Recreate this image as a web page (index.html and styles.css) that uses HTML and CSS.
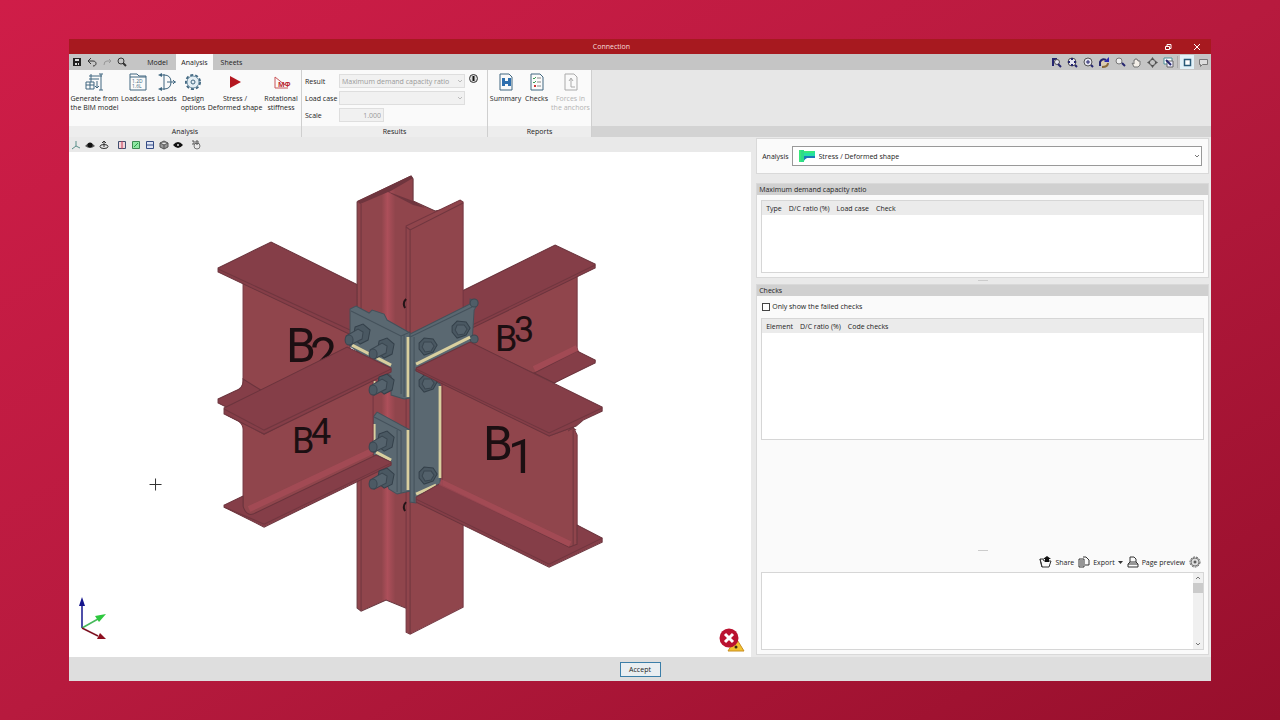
FILE: index.html
```html
<!DOCTYPE html>
<html lang="en">
  <head>
    <meta charset="UTF-8" />
    <meta name="viewport" content="width=device-width, initial-scale=1.0" />
    <title>Connection</title>
    <link rel="stylesheet" href="styles.css">
  </head>
  <body>
    <div class="window">
      <header class="titlebar">
        <h1>Connection</h1>
        <div class="window-buttons">
          <button aria-label="Restore"><svg width="8" height="8" viewBox="0 0 8 8"><path d="M1.500 3.500h4v3h-4zM3 3V1.500h4v4H6" /></svg></button>
          <button aria-label="Close"><svg width="8" height="8" viewBox="0 0 8 8"><path d="M1 1l6 6M7 1L1 7" /></svg></button>
        </div>
      </header>

      <nav class="tabbar">
        <div class="quick">
          <button aria-label="Save"><svg width="10" height="10" viewBox="0 0 10 10"><path d="M1 1h8v8H1z" fill="#222" /><path d="M3 2h4v2H3zM3 6h4v2H3z" fill="#ddd" /><path d="M5 6h1v2H5z" fill="#222" /></svg></button>
          <button aria-label="Undo"><svg width="10" height="10" viewBox="0 0 10 10"><path class="line" d="M4 1L1 4l3 3M1 4h5c4 0 4 5 0 5" /></svg></button>
          <button aria-label="Redo" disabled><svg width="10" height="10" viewBox="0 0 10 10"><path class="line" d="M7 2l2 2-2 2M9 4H5Q2 4 2 8" /></svg></button>
          <button aria-label="Search"><svg width="10" height="10" viewBox="0 0 10 10"><circle class="line" cx="4" cy="4" r="3" /><path class="line bold" d="M6 6l3 3" /></svg></button>
        </div>
        <div class="tabs">
          <button>Model</button>
          <button class="active">Analysis</button>
          <button>Sheets</button>
        </div>
        <div class="view-tools">
          <button aria-label="Zoom window"><svg width="11" height="11" viewBox="0 0 11 11"><path class="navy bold" d="M2 9V2h4" /><circle cx="6" cy="5" r="2.500" fill="#e4e4ee" stroke="#555" /><path class="navy bold" d="M7 7l3 3" /></svg></button>
          <button aria-label="Zoom all"><svg width="11" height="11" viewBox="0 0 11 11"><circle cx="5" cy="5" r="4" fill="#e4e4ee" stroke="#555" /><path class="navy bold" d="M5 1v2M5 7v2M1 5h2M7 5h2M8 8l2 2" /></svg></button>
          <button aria-label="Zoom real"><svg width="11" height="11" viewBox="0 0 11 11"><circle cx="5" cy="5" r="4" fill="#e4e4ee" stroke="#555" /><path class="navy" d="M3 5h4M5 3v4" /><path class="navy bold" d="M8 8l2 2" /></svg></button>
          <button aria-label="Redraw"><svg width="11" height="11" viewBox="0 0 11 11"><circle cx="5" cy="6" r="3" fill="#dccdb0" /><path class="navy bold" d="M1 9V5q2-4 6-2" /><path d="M10 0v5H5z" fill="#2a2ab0" /><path d="M9 6q0 4-6 4" fill="none" stroke="#8a6a3a" stroke-width="2" /></svg></button>
          <button aria-label="Previous view"><svg width="11" height="11" viewBox="0 0 11 11"><circle cx="4" cy="4" r="3" fill="#eee" stroke="#777" /><path class="navy bold" d="M7 6l3 3" /></svg></button>
          <button aria-label="Pan"><svg width="11" height="11" viewBox="0 0 11 11"><path d="M3 10L1 6l2 1V3h1V2h2v1h1v1h2v4l-2 2z" fill="#f4efe8" stroke="#777" /></svg></button>
          <button aria-label="Orbit"><svg width="11" height="11" viewBox="0 0 11 11"><circle cx="5.500" cy="5.500" r="3" fill="none" stroke="#555" /><path d="M5.500 0l2 3h-4zM5.500 11l2-3h-4zM0 5.500l3-2v4zM11 5.500l-3-2v4z" fill="#555" /></svg></button>
          <button aria-label="Print view"><svg width="11" height="11" viewBox="0 0 11 11"><path d="M1 1h8v6H1z" fill="#fff" stroke="#4a8f9a" /><path d="M4 4h6v6H4z" fill="#eef" stroke="#666" /><path class="navy bold" d="M3 3l5 5" /></svg></button>
          <span class="divider"></span>
          <button class="on" aria-label="Frame"><svg width="11" height="11" viewBox="0 0 11 11"><path d="M2.500 2.500h6v6h-6z" fill="#fff" stroke="#285a78" stroke-width="1.500" /></svg></button>
          <button aria-label="Comment"><svg width="11" height="11" viewBox="0 0 11 11"><path d="M1.500 2.500h8v5h-5l-2 2v-2h-1z" fill="#ddd" stroke="#777" /></svg></button>
        </div>
      </nav>

      <section class="ribbon">
        <div class="group analysis">
          <div class="group-body">
            <button class="tool generate"><svg width="20" height="18" viewBox="0 0 20 18"><path class="steel" d="M4 3h13M4 6h10M6 1v8M16 1v16M14 1h4M14 17h4M12 8v7M10 13l2 2 2-2M1 9h8v7H1zM1 12h8M5 9v7" /></svg>Generate from<br>the BIM model</button>
            <button class="tool loadcases"><svg width="20" height="18" viewBox="0 0 20 18"><path class="steel" d="M2 1h7l2 2h7v14H2zM2 4h16" /><text x="4" y="10">1.2D</text><text x="4" y="15">1.6L</text></svg>Loadcases</button>
            <button class="tool loads"><svg width="20" height="18" viewBox="0 0 20 18"><path class="steel" d="M3 2h4q7 0 7 7t-7 7H3M7 1v16M10 9h9M16 7l2 2-2 2" /><path d="M1 2l4-2v4zM1 16l4-2v4z" fill="#416780" /></svg>Loads</button>
            <button class="tool design"><svg width="20" height="18" viewBox="0 0 20 18"><circle class="steel" cx="10" cy="9" r="7" stroke-width="2" stroke-dasharray="3 2" /><circle cx="10" cy="9" r="6" fill="#e4eef4" stroke="#6d8ea3" /><circle class="steel" cx="10" cy="9" r="2" /></svg>Design<br>options</button>
            <button class="tool stress"><svg width="20" height="18" viewBox="0 0 20 18"><path d="M5 3l11 6-11 6z" fill="#b41720" /></svg>Stress /<br>Deformed shape</button>
            <button class="tool rotational"><svg width="20" height="18" viewBox="0 0 20 18"><path d="M4 15V4l10 8M4 15h13" fill="none" stroke="#c95558" /><text class="red" x="7" y="14">MΦ</text></svg>Rotational<br>stiffness</button>
          </div>
          <h2>Analysis</h2>
        </div>
        <div class="group results">
          <div class="group-body fields">
            <label for="result">Result</label>
            <span class="drop"><select id="result" disabled><option>Maximum demand capacity ratio</option></select><svg class="chevron" width="6" height="4" viewBox="0 0 6 4"><path d="M1 1l2 2 2-2" /></svg></span>
            <button class="info" aria-label="Result info"><svg width="9" height="9" viewBox="0 0 9 9"><circle cx="4.500" cy="4.500" r="4" fill="#ddd" stroke="#333" /><path d="M4.500 2v5" stroke="#111" stroke-width="2" /></svg></button>
            <label for="loadcase">Load case</label>
            <span class="drop"><select id="loadcase" disabled><option></option></select><svg class="chevron" width="6" height="4" viewBox="0 0 6 4"><path d="M1 1l2 2 2-2" /></svg></span>
            <label for="scale">Scale</label>
            <input id="scale" type="text" value="1.000" disabled>
          </div>
          <h2>Results</h2>
        </div>
        <div class="group reports">
          <div class="group-body">
            <button class="tool summary"><svg width="20" height="18" viewBox="0 0 20 18"><path class="steel" d="M4 1h9l3 3v13H4z" /><path d="M6 5h3v3h3V5h3v8h-3v-2H9v2H6z" fill="#2e6fae" /></svg>Summary</button>
            <button class="tool checks"><svg width="20" height="18" viewBox="0 0 20 18"><path class="steel" d="M4 1h9l3 3v13H4z" /><path d="M6 5l1 1 2-2M6 9l1 1 2-2" fill="none" stroke="#3b9b55" /><path d="M10 5h4M10 9h4M10 13h4" stroke="#888" /><path d="M7 12l2 2M9 12l-2 2" stroke="#c33" /></svg>Checks</button>
            <button class="tool forces" disabled><svg width="20" height="18" viewBox="0 0 20 18"><path d="M4 1h9l3 3v13H4zM10 6v8h4M8 8l2-3 2 3" fill="none" stroke="#aaa" /></svg>Forces in<br>the anchors</button>
          </div>
          <h2>Reports</h2>
        </div>
      </section>

      <main>
        <section class="viewport">
          <div class="view-bar">
            <button aria-label="Axes"><svg width="10" height="10" viewBox="0 0 10 10"><path d="M5 6V1M5 6L1 9M5 6l4 2" fill="none" stroke="#5b8f8a" /></svg></button>
            <button aria-label="Look"><svg width="10" height="10" viewBox="0 0 10 10"><path d="M0 6q5-6 10 0q-5 4-10 0z" fill="#555" /><circle cx="5" cy="5" r="2.500" fill="#111" /></svg></button>
            <button aria-label="Turn"><svg width="10" height="10" viewBox="0 0 10 10"><path class="line" d="M5 1v6M3 3l2-2 2 2" /><ellipse class="line" cx="5" cy="6.500" rx="4" ry="2" /></svg></button>
            <button class="gap" aria-label="Front"><svg width="10" height="10" viewBox="0 0 10 10"><path d="M1.500 1.500h7v7h-7z" fill="#f3d5da" stroke="#405070" /><path d="M5 1v8" stroke="#c33b55" /></svg></button>
            <button aria-label="Side"><svg width="10" height="10" viewBox="0 0 10 10"><path d="M1.500 1.500h7v7h-7z" fill="#8fe8a2" stroke="#3c8a50" /><path d="M3 7l4-4" stroke="#2a9a48" /></svg></button>
            <button aria-label="Top"><svg width="10" height="10" viewBox="0 0 10 10"><path d="M1.500 1.500h7v7h-7z" fill="#dfe5f5" stroke="#354c85" /><path d="M1 5h8" stroke="#354c85" /></svg></button>
            <button aria-label="Solid"><svg width="10" height="10" viewBox="0 0 10 10"><path d="M5 1l4 2v4L5 9 1 7V3zM1 3l4 2 4-2M5 5v4" fill="#999" stroke="#555" /></svg></button>
            <button aria-label="Hide"><svg width="10" height="10" viewBox="0 0 10 10"><path d="M0 5q5-6 10 0q-5 6-10 0z" fill="#111" /><circle cx="5" cy="5" r="1" fill="#ddd" /></svg></button>
            <button class="gap" aria-label="3D settings"><svg width="10" height="10" viewBox="0 0 10 10"><circle cx="6" cy="6" r="3" fill="none" stroke="#777" /><path d="M1 1h2v3H1M5 1h2v3H5z" fill="none" stroke="#555" /></svg></button>
          </div>
          <div class="scene">
            <svg class="model" viewBox="69 152 682 505" role="img" aria-label="Steel connection">
              <defs>
                <linearGradient id="column" x1="357" x2="406" gradientUnits="userSpaceOnUse">
                  <stop offset="0" stop-color="#90454c" />
                  <stop offset=".5" stop-color="#90454c" />
                  <stop offset=".62" stop-color="#ad4f5a" />
                  <stop offset=".78" stop-color="#90454c" />
                </linearGradient>
                <g id="head">
                  <path d="M-9-4l5-5 9 1 4 6-4 7-9 3-5-6z" fill="#4a5862" stroke="#34404a" />
                  <path d="M-4-5l7 0 3 4-3 5-6 1-3-5z" fill="#53616b" stroke="#3a4650" />
                </g>
                <g id="bolt">
                  <path d="M-3-7l8-3 7 6-2 10-8 4-7-6z" fill="#4a5862" stroke="#34404a" />
                  <path d="M-12 2L0-5l5 3-1 7-12 6-4-3z" fill="#55636d" stroke="#3a4650" />
                  <ellipse cx="-9" cy="6" rx="4" ry="5" fill="#4c5a64" stroke="#3a4650" />
                </g>
              </defs>

              <!-- B2 -->
              <path class="web" d="M243 279l107 50v80H243z" />
              <path class="flange" d="M218 399l17-8q9-3 8-12l21 13-34 17-12-6z" />
              <path class="flange" d="M218 268l53-26 87 43v48l-9 1-131-62z" />
              <path class="edge" d="M218 269l132 61" />
              <text class="big" x="286 310" y="362 371">B2</text>

              <!-- B3 -->
              <path class="web" d="M470 326l107-52v74q1 6 8 8l10 5-41 22-21-10-63-30z" />
              <path class="flange" d="M534 373l43-22 18 9v3l-41 20z" />
              <path class="shine" d="M534 369l43-21" />
              <path class="flange" d="M462 291l93-46 40 19v4l-125 61-8-3z" />
              <path class="edge" d="M470 326l125-61" />
              <text class="small" x="495 514" y="351 342">B3</text>

              <!-- column -->
              <path d="M357 202l54-26 2 3v22l22 10 5-1v391l-34 7-20-8-25 11-4-3z" fill="url(#column)" stroke="#66343c" />
              <path d="M357 201l53-25 3 2-24 14 24 9 12 7-12-3-25-13-28 12z" fill="#6f353e" />
              <path class="web" d="M406 226l54-26 3 2v405l-53 27-4-2z" />
              <path class="edge" d="M406 227l4 3 53-27M410 230v404M361 204v406" />
              <path d="M406 299q-4 4-1 9M406 502q-4 4-1 9" fill="none" stroke="#231417" stroke-width="2" />

              <!-- plates at the back and on the left -->
              <path class="plate" d="M350 309l6-3 13 7 3-3 12 4 3 6 23 13v65l-6 1-13-4v-19l-41-30z" />
              <path class="plate-edge" d="M351 311l50 25v58M401 336l9-4M404 335v62" />
              <path class="weld" d="M352 345l39 20M374 381v14" />
              <path class="plate" d="M373 417l4-5 33 18v61l-13 3-8-5-16-35z" />
              <path class="plate-edge" d="M374 417l27 14v62M397 430v62" />
              <path class="weld" d="M374 424v21M376 452l15 8" />
              <path class="weld" d="M408 337v60M408 430v60" />
              <use href="#bolt" x="358" y="334" />
              <use href="#bolt" x="382" y="348" />

              <!-- B4 -->
              <path class="web" d="M227 415l37 19 109-57v78l9 5-126 60q-13-4-13-14v-77q0-8-16-14z" />
              <path class="flange" d="M224 505l19-9v10q3 10 10 8l123-59 15 7v3l-127 62-40-20z" />
              <path class="shine" d="M249 509l123-58" />
              <path class="flange" d="M224 408l123-61 44 21v4l-127 62-40-20z" />
              <path class="edge" d="M224 409l40 21 127-61M224 507l40 17 127-61" />
              <text class="small" x="292 311" y="453 444">B4</text>
              <use href="#bolt" x="382" y="384" />
              <use href="#bolt" x="382" y="441" />
              <use href="#bolt" x="382" y="478" />

              <!-- front plate -->
              <path class="plate" d="M410 334l60-30v-5l4 1 3 5-3 5-2 32-57 28 25 14v105l-24 14-6-1z" />
              <path class="plate-edge" d="M410 337l62-30M414 337v166" />
              <circle class="nut" cx="474" cy="303" r="4" />
              <circle class="nut" cx="474" cy="339" r="4" />
              <use href="#head" x="461" y="330" />
              <use href="#head" x="428" y="347" />
              <use href="#head" x="428" y="384" />
              <use href="#head" x="428" y="476" />
              <path class="weld" d="M416 364l54-27M440 386v92M416 494l20-9" />

              <!-- B1 -->
              <path class="web" d="M442 380l107 56 24-9 4 8v110l-11 4-124-63z" />
              <path class="flange" d="M416 497l23-13 130 63 8-3v-19l25 13v4l-53 25-133-65z" />
              <path class="shine" d="M440 482l130 62" />
              <path class="flange" d="M416 368l54-26 132 65v4l-19 9-7 6-27 10-133-65z" />
              <path class="edge" d="M416 369l133 64 53-25M416 499l133 65 53-26M573 430v116M568 431q4-4 8-1" />
              <text class="big" x="483 508" y="460 473">B1</text>

              <path class="cross" d="M149.500 484.500h12M155.500 478.500v12" />
            </svg>
            <svg class="axes" width="30" height="44" viewBox="0 0 30 44">
              <path d="M4 31V8" stroke="#14148c" stroke-width="1.500" /><path d="M4 0l3 9H1z" fill="#14148c" />
              <path d="M4 31l16-9" stroke="#45b85a" stroke-width="1.500" /><path d="M28 17l-7 8-4-6z" fill="#2dc83e" />
              <path d="M4 31l16 8" stroke="#7c1020" stroke-width="1.500" /><path d="M28 42l-9 0 3-6z" fill="#8e1020" />
            </svg>
            <svg class="alert" width="26" height="26" viewBox="0 0 26 26">
              <path d="M17 11l8 13H9z" fill="#f2c230" stroke="#c98d20" />
              <circle cx="10" cy="11" r="9.500" fill="#ba1230" />
              <path d="M6 7l8 8M14 7l-8 8" stroke="#fff" stroke-width="3" />
              <circle cx="17" cy="20" r="1.500" fill="#3a2a10" />
            </svg>
          </div>
        </section>

        <aside>
          <div class="card picker">
            <label for="analysis">Analysis</label>
            <span class="drop wide">
              <svg class="flag" width="18" height="14" viewBox="0 0 18 14"><path d="M1 1h5v12H1z" fill="#2edb88" /><path d="M6 2h11v5H9l-3 5z" fill="#25e0a4" /><path d="M6 7h11v2H9l-3 2z" fill="#1b78b8" /><path d="M2 1v12M6 3h10" stroke="#38e87a" stroke-width="2" /></svg>
              <select id="analysis"><option>Stress / Deformed shape</option></select>
              <svg class="chevron" width="6" height="4" viewBox="0 0 6 4"><path d="M1 1l2 2 2-2" /></svg>
            </span>
          </div>

          <div class="card">
            <h3>Maximum demand capacity ratio</h3>
            <div class="card-body">
              <div class="grid-box ratio">
                <table>
                  <tr><th>Type</th><th>D/C ratio (%)</th><th>Load case</th><th>Check</th></tr>
                </table>
              </div>
            </div>
            <span class="grip"></span>
          </div>

          <div class="card grow">
            <h3>Checks</h3>
            <div class="card-body">
              <label class="tick"><input type="checkbox">Only show the failed checks</label>
              <div class="grid-box code">
                <table>
                  <tr><th>Element</th><th>D/C ratio (%)</th><th>Code checks</th></tr>
                </table>
              </div>
              <span class="grip inner"></span>
              <div class="report-tools">
                <button><svg width="13" height="12" viewBox="0 0 13 12"><path class="line" d="M1 3h3l1 2h7l-2 6H3zM1 3l2 8" /><path d="M8 0l4 3h-2v3H6V3H4z" fill="#111" /></svg>Share</button>
                <button class="export"><svg width="12" height="12" viewBox="0 0 12 12"><path class="line" d="M1 3h5v8H1zM5 1h3l3 3v5H7M2 5h3M2 7h3M2 9h3" /></svg>Export<svg width="5" height="3" viewBox="0 0 5 3"><path d="M0 0h5L2.500 3z" fill="#333" /></svg></button>
                <button><svg width="12" height="12" viewBox="0 0 12 12"><path class="line" d="M3 6V1h4l2 2v3M1 8l2-2h6l2 2v3H1zM1 8h10" /></svg>Page preview</button>
                <button aria-label="Settings"><svg width="12" height="12" viewBox="0 0 12 12"><circle cx="6" cy="6" r="5" fill="none" stroke="#555" stroke-dasharray="2 1" /><circle cx="6" cy="6" r="4" fill="#ddd" stroke="#777" /><circle class="line" cx="6" cy="6" r="1" /></svg></button>
              </div>
              <div class="report">
                <div class="scrollbar">
                  <button aria-label="Scroll up"><svg width="6" height="4" viewBox="0 0 6 4"><path d="M1 3l2-2 2 2" /></svg></button>
                  <span class="thumb"></span>
                  <button class="down" aria-label="Scroll down"><svg width="6" height="4" viewBox="0 0 6 4"><path d="M1 1l2 2 2-2" /></svg></button>
                </div>
              </div>
            </div>
          </div>
        </aside>
      </main>

      <footer>
        <button>Accept</button>
      </footer>
    </div>
  </body>
</html>
```
FILE: styles.css
```css
* {
  margin: 0;
  padding: 0;
  box-sizing: border-box;
}
body {
  min-height: 100vh;
  display: flex;
  padding: 39px 69px;
  background: linear-gradient(to bottom right, #cf1d48, #b71a3e 50%, #970f2c);
  font-family: "Open Sans", "Noto Sans", sans-serif;
  font-size: 7px;
  line-height: 9px;
  color: #222;
}
h1,
h2,
h3,
th {
  font-size: 7px;
  font-weight: 400;
}
button,
input,
select {
  font: inherit;
  color: inherit;
}
button {
  border: 0;
  background: none;
  display: flex;
  align-items: center;
  justify-content: center;
  cursor: pointer;
}
svg {
  display: block;
  flex-shrink: 0;
}
.line {
  fill: none;
  stroke: #333;
}
.navy {
  fill: none;
  stroke: #25256f;
}
.steel {
  fill: none;
  stroke: #416780;
}
.bold {
  stroke-width: 2;
}
.window {
  flex: 1;
  display: flex;
  flex-direction: column;
  background: #e9e9e9;
}

/* title and tabs */
.titlebar {
  height: 15px;
  display: flex;
  align-items: center;
  background: #a7191f;
  color: #f6dddd;
}
.titlebar h1 {
  flex: 1;
  padding-right: 10px;
  text-align: center;
}
.window-buttons {
  display: flex;
  gap: 21px;
  padding-right: 10px;
}
.window-buttons path {
  fill: none;
  stroke: #fff;
}
.tabbar {
  height: 16px;
  display: flex;
  align-items: stretch;
  background: #c5c5c5;
}
.quick {
  width: 70px;
  display: flex;
  gap: 5px;
  padding-left: 3px;
}
.quick button:disabled {
  opacity: .3;
}
.tabs {
  flex: 1;
  display: flex;
}
.tabs button {
  width: 37px;
}
.tabs .active {
  background: #fafafa;
}
.view-tools {
  display: flex;
  align-items: center;
  gap: 2px;
  padding-right: 1px;
}
.view-tools button {
  width: 14px;
  height: 14px;
}
.view-tools .on {
  background: #e2f1f8;
}
.divider {
  width: 1px;
  height: 12px;
  background: #aaa;
}

/* ribbon */
.ribbon {
  height: 67px;
  display: flex;
  background: linear-gradient(#e7e7e7 56px, #d3d3d3 56px);
}
.group {
  display: flex;
  flex-direction: column;
  border-right: 1px solid #cfcfcf;
  background: #fafafa;
}
.group h2 {
  height: 11px;
  line-height: 11px;
  text-align: center;
  background: #ededed;
}
.group-body {
  flex: 1;
  display: flex;
  align-items: flex-start;
  padding-top: 3px;
}
.analysis {
  width: 233px;
}
.results {
  width: 186px;
}
.reports {
  width: 104px;
}
.tool {
  flex-direction: column;
  white-space: nowrap;
}
.tool svg {
  margin-bottom: 3px;
}
.tool text {
  font-size: 5px;
  fill: #416780;
}
.tool .red {
  font-size: 7px;
  font-weight: 700;
  fill: #b9272f;
}
.tool:disabled {
  color: #b3b3b3;
}
.generate {
  width: 51px;
}
.loadcases {
  width: 36px;
}
.loads {
  width: 22px;
}
.design {
  width: 30px;
}
.stress {
  width: 54px;
}
.rotational {
  width: 38px;
}
.summary {
  width: 35px;
}
.checks {
  width: 27px;
}
.forces {
  width: 41px;
}
.group-body.fields {
  display: grid;
  grid-template-columns: 34px 126px 12px;
  grid-auto-rows: 14px;
  row-gap: 3px;
  align-items: center;
  padding: 4px 0 0 3px;
}
.fields > :nth-child(4) {
  grid-column: 1;
}
.fields > :nth-child(6) {
  grid-column: 1;
}
.info {
  margin-bottom: 5px;
  padding-left: 4px;
}
.drop {
  position: relative;
  display: flex;
}
select {
  width: 100%;
  height: 14px;
  padding-left: 2px;
  appearance: none;
  border: 1px solid #999;
  border-radius: 0;
  background: #fff;
}
select:disabled,
input:disabled {
  border: 1px solid #dedede;
  background: #f1f1f1;
  color: #999;
  opacity: 1;
}
.chevron {
  position: absolute;
  right: 2px;
  top: 5px;
  pointer-events: none;
}
.chevron path,
.scrollbar path {
  fill: none;
  stroke: #777;
}
.fields .chevron path {
  stroke: #bbb;
}
#scale {
  width: 45px;
  height: 14px;
  padding-right: 2px;
  text-align: right;
}

/* work area */
main {
  flex: 1;
  display: grid;
  grid-template-columns: 3fr 2fr;
  gap: 5px;
}
.viewport {
  display: flex;
  flex-direction: column;
}
.view-bar {
  height: 15px;
  display: flex;
  align-items: center;
  gap: 4px;
  padding-left: 2px;
}
.view-bar .gap {
  margin-left: 4px;
}
.scene {
  position: relative;
  flex: 1;
  background: #fff;
}
.model {
  width: 100%;
}
.flange {
  fill: #853e48;
  stroke: #6b343d;
}
.web {
  fill: #90454c;
  stroke: #743640;
}
.edge {
  fill: none;
  stroke: #70363f;
}
.shine {
  fill: none;
  stroke: #a94d58;
  stroke-width: 6;
  opacity: .7;
}
.plate {
  fill: #5a6871;
  stroke: #44515b;
}
.plate-edge {
  fill: none;
  stroke: #44515b;
}
.weld {
  fill: none;
  stroke: #d9cf9f;
  stroke-width: 3;
}
.nut {
  fill: #4f5d67;
  stroke: #3b4851;
}
.model text {
  font-family: Roboto, "Open Sans", sans-serif;
  fill: #1c0f12;
}
.model .big {
  font-size: 48px;
}
.model .small {
  font-size: 36px;
}
.cross {
  stroke: #333;
}
.axes {
  position: absolute;
  left: 9px;
  bottom: 16px;
}
.alert {
  position: absolute;
  right: 6px;
  bottom: 4px;
}

/* right side */
aside {
  display: flex;
  flex-direction: column;
  padding: 1px 2px 2px 0;
}
.card {
  position: relative;
  border: 1px solid #d9d9d9;
  background: #fafafa;
  margin-bottom: 6px;
}
.picker {
  height: 36px;
  display: flex;
  align-items: center;
  gap: 3px;
  padding: 0 6px 0 5px;
  margin-bottom: 9px;
}
.wide {
  flex: 1;
}
.wide select {
  height: 20px;
  padding-left: 26px;
}
.wide .chevron {
  top: 8px;
}
.flag {
  position: absolute;
  left: 6px;
  top: 3px;
}
.grow {
  flex: 1;
  display: flex;
  flex-direction: column;
  margin-bottom: 0;
}
h3 {
  height: 11px;
  padding-left: 2px;
  line-height: 11px;
  background: #d0d0d0;
}
.card-body {
  padding: 5px 4px 4px;
}
.grow .card-body {
  flex: 1;
  display: flex;
  flex-direction: column;
}
.grid-box {
  border: 1px solid #d6d6d6;
  background: #fff;
}
.ratio {
  height: 73px;
}
.code {
  height: 122px;
}
table {
  width: 100%;
  border-collapse: collapse;
  background: #ebebeb;
}
th {
  height: 14px;
  padding: 0 3px 0 4px;
  text-align: left;
  white-space: nowrap;
}
th:last-child {
  width: 100%;
}
.grip {
  position: absolute;
  left: 49%;
  bottom: -4px;
  width: 10px;
  height: 1px;
  background: #ccc;
}
.tick {
  display: flex;
  align-items: center;
  gap: 2px;
  padding: 1px 0 7px 1px;
}
.tick input {
  appearance: none;
  width: 8px;
  height: 8px;
  border: 1px solid #444;
  background: #fff;
}
.grip.inner {
  bottom: 103px;
}
.report-tools {
  display: flex;
  justify-content: flex-end;
  gap: 4px;
  margin-top: auto;
  padding: 0 3px 4px 0;
}
.report-tools button {
  gap: 3px;
}
.report {
  height: 78px;
  display: flex;
  justify-content: flex-end;
  border: 1px solid #d6d6d6;
  background: #fff;
}
.scrollbar {
  width: 10px;
  display: flex;
  flex-direction: column;
  background: #f0f0f0;
}
.scrollbar button {
  height: 10px;
}
.thumb {
  height: 10px;
  background: #cbcbcb;
}
.scrollbar .down {
  margin-top: auto;
}

footer {
  height: 24px;
  display: flex;
  align-items: center;
  justify-content: center;
  background: #dedede;
}
footer button {
  width: 41px;
  height: 15px;
  border: 1px solid #3b7ea8;
  background: #e9eef1;
}
```
